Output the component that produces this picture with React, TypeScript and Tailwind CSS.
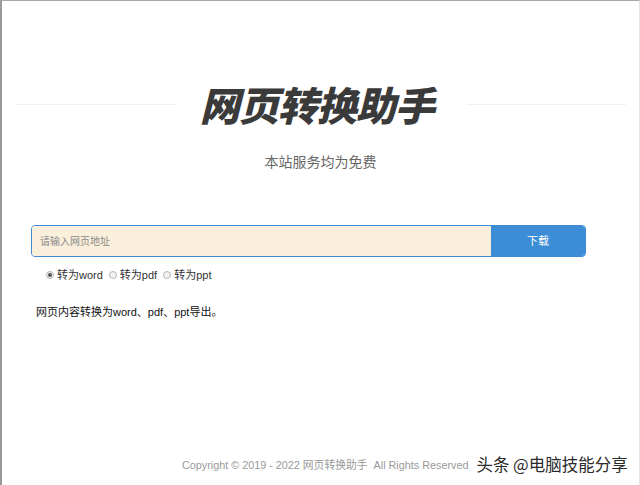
import { useState } from 'react';

const FONT = '"Liberation Sans", "Noto Sans CJK SC", sans-serif';

export default function App() {
  const [format, setFormat] = useState('word');
  const [url, setUrl] = useState('');

  const options = [
    { key: 'word', label: '转为word' },
    { key: 'pdf', label: '转为pdf' },
    { key: 'ppt', label: '转为ppt' },
  ];

  return (
    <main
      className="relative flex h-[485px] w-[640px] flex-col overflow-hidden border-l-2 border-t border-r border-l-[#9a9a9a] border-t-[#a8a8a8] border-r-[#e4e4e4] bg-white text-[#333]"
      style={{ fontFamily: FONT }}
    >
      {/* 标题 */}
      <section className="mt-[78px] flex items-center px-[13px]">
        <div className="h-px flex-1 bg-[#f1f1f1]" />
        <h1
          className="mx-[28px] -skew-x-[14deg] text-[40px] leading-[50px] font-black tracking-[-1px] text-[#3a3a3a]"
          style={{ fontFamily: '"Noto Sans CJK SC", sans-serif' }}
        >
          网页转换助手
        </h1>
        <div className="h-px flex-1 bg-[#f1f1f1]" />
      </section>
      <p className="mt-[24px] text-center text-[14px] leading-[18px] text-[#666]">本站服务均为免费</p>

      {/* 输入框 */}
      <div className="mt-[54px] ml-[29px] flex h-[32px] w-[555px] overflow-hidden rounded-[4px] border border-[#3c8dd6]">
        <input
          value={url}
          onChange={(e) => setUrl(e.target.value)}
          placeholder="请输入网页地址"
          className="h-full flex-1 bg-[#faefdb] px-[8px] text-[10px] text-[#333] outline-none placeholder:text-[#8a8a8a]"
        />
        <button className="h-full w-[94px] bg-[#3c8dd6] text-[11px] text-white">下载</button>
      </div>

      <div className="mt-[11px] ml-[44px] flex items-center gap-[6px] text-[11px] leading-[14px] text-[#333]">
        {options.map((opt) => (
          <label key={opt.key} className="flex cursor-pointer items-center gap-[3px]">
            <span
              onClick={() => setFormat(opt.key)}
              className="flex h-[8px] w-[8px] items-center justify-center rounded-full border border-[#b5b5b5] bg-[#f3f3f3]"
            >
              {format === opt.key ? <span className="h-[4px] w-[4px] rounded-full bg-[#555]" /> : null}
            </span>
            <span onClick={() => setFormat(opt.key)}>{opt.label}</span>
          </label>
        ))}
      </div>

      <p className="mt-[23px] ml-[34px] text-[11px] leading-[14px] text-[#111]">网页内容转换为word、pdf、ppt导出。</p>

      {/* 页脚 */}
      <footer className="mt-auto mb-[8px] ml-[180px] flex items-center gap-[8px]">
        <span className="text-[10.8px] text-[#999]">Copyright © 2019 - 2022 网页转换助手&nbsp; All Rights Reserved</span>
        <span className="text-[16.5px] text-[#2a2a2a]" style={{ fontFamily: '"Noto Sans CJK SC", sans-serif' }}>
          头条 @电脑技能分享
        </span>
      </footer>
    </main>
  );
}
